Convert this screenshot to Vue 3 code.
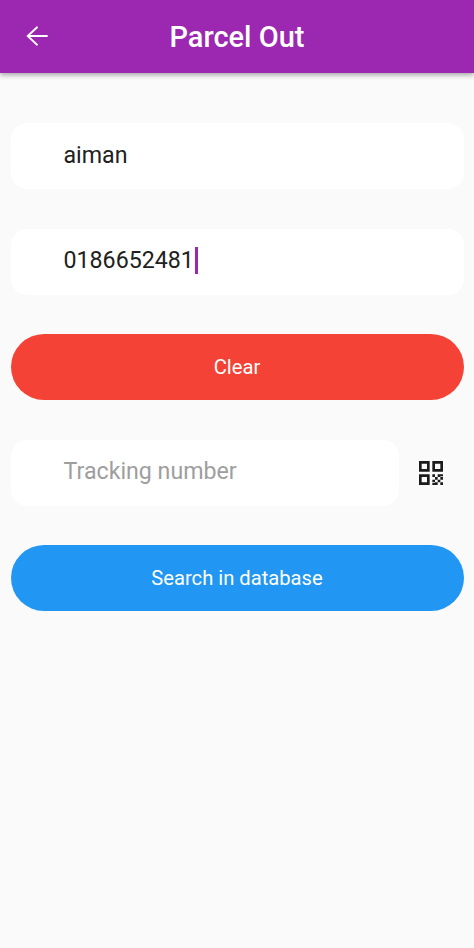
<script setup>
const name = 'aiman'
const phone = '0186652481'
</script>

<template>
  <div class="page">
    <header class="bar">
      <svg class="back" viewBox="0 0 24 24" width="32" height="30" preserveAspectRatio="none" aria-hidden="true">
        <path d="M20 11.2H6.9l5.9-5.9L12 4l-8 8 8 8 .8-1.3-5.9-5.9H20v-1.6z" fill="#fff" />
      </svg>
      <h1 class="title">Parcel Out</h1>
    </header>

    <main class="content">
      <div class="field"><span class="value">{{ name }}</span></div>
      <div class="field"><span class="value">{{ phone }}</span><span class="caret"></span></div>
      <button class="pill red">Clear</button>
      <div class="scan-row">
        <div class="field grow"><span class="placeholder">Tracking number</span></div>
        <svg class="qr" viewBox="0 0 24 24" width="32" height="32" aria-hidden="true">
          <path fill="#1c1c1c" d="M3 11h8V3H3v8zm2-6h4v4H5V5zM3 21h8v-8H3v8zm2-6h4v4H5v-4zM13 3v8h8V3h-8zm6 6h-4V5h4v4zM13 13h2v2h-2zM15 15h2v2h-2zM13 17h2v2h-2zM15 19h2v2h-2zM17 17h2v2h-2zM17 13h2v2h-2zM19 15h2v2h-2zM19 19h2v2h-2zM13 19.5h2V21h-2zM19 13h2v1.5h-2z" />
        </svg>
      </div>
      <button class="pill blue">Search in database</button>
    </main>
  </div>
</template>

<style scoped>
.page {
  width: 474px;
  height: 948px;
  background: #fafafa;
  font-family: Roboto, "Liberation Sans", sans-serif;
  overflow: hidden;
}
.bar {
  height: 73px;
  background: #9c27b0;
  box-shadow: 0 2px 5px rgba(0, 0, 0, 0.35);
  display: flex;
  align-items: center;
  justify-content: center;
  position: relative;
}
.back {
  position: absolute;
  left: 21px;
  top: 21px;
}
.title {
  margin: 0;
  color: #fff;
  font-size: 29px;
  font-weight: 500;
}
.content {
  padding: 50px 10.5px 0;
  display: flex;
  flex-direction: column;
  gap: 39.5px;
}
.field {
  height: 66px;
  background: #fff;
  border-radius: 16px;
  display: flex;
  align-items: center;
  padding: 0 0 3px 53px;
  font-size: 23.2px;
  box-sizing: border-box;
}
.value {
  color: #212121;
}
.placeholder {
  color: #9e9e9e;
}
.caret {
  width: 3px;
  height: 27px;
  margin-left: 1px;
  background: #9c27b0;
}
.pill {
  height: 66px;
  border: 0;
  border-radius: 33px;
  color: #fff;
  font: 400 20.2px Roboto, "Liberation Sans", sans-serif;
}
.red {
  background: #f44336;
}
.blue {
  background: #2196f3;
}
.scan-row {
  display: flex;
  align-items: center;
}
.grow {
  width: 388px;
  flex: none;
}
.qr {
  margin-left: 16.5px;
}
</style>
